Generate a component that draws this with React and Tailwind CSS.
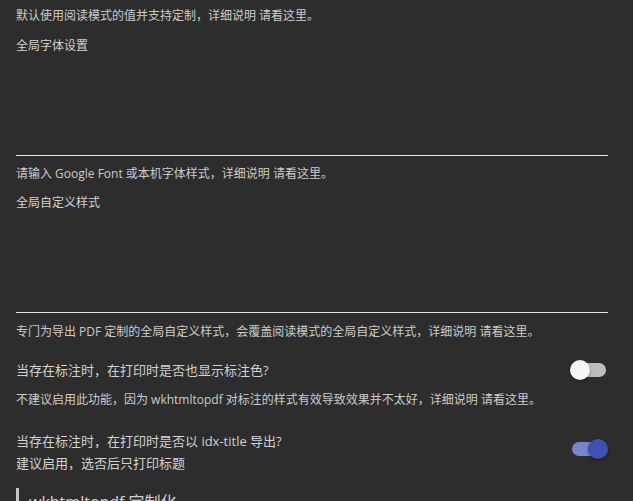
import React, { useState } from 'react';

const font = { fontFamily: '"Open Sans", "Noto Sans CJK SC", "Microsoft YaHei", sans-serif' };

const Toggle = ({ on, onChange, className = '' }) => (
  <button
    type="button"
    onClick={() => onChange(!on)}
    className={`relative w-[38px] h-[20px] shrink-0 ${className}`}
  >
    <span
      className={`absolute left-[2px] right-[2px] top-[3px] h-[14px] rounded-full ${
        on ? 'bg-[#7986cb]' : 'bg-[#bdbdbd]'
      }`}
    />
    <span
      className={`absolute top-0 w-[20px] h-[20px] rounded-full shadow-[0_1px_3px_rgba(0,0,0,0.4)] ${
        on ? 'left-[18px] bg-[#3f51b5]' : 'left-0 bg-[#f5f5f5]'
      }`}
    />
  </button>
);

const App = () => {
  const [showColor, setShowColor] = useState(false);
  const [idxTitle, setIdxTitle] = useState(true);

  return (
    <section
      style={font}
      className="min-h-screen h-[501px] overflow-hidden bg-[#2d2d2d] pl-4 pr-[25px] text-[#d2d2d2]"
    >
      <p className="pt-[6px] text-[12px] leading-[20px] text-[#cbcbcb]">
        默认使用阅读模式的值并支持定制，详细说明 请看这里。
      </p>

      <div className="h-[130px] border-b border-[#e4e4e4] pt-[10px]">
        <label className="block text-[12px] leading-[20px]">全局字体设置</label>
      </div>

      <p className="mt-[8px] text-[12px] leading-[20px] text-[#cbcbcb]">
        请输入 Google Font 或本机字体样式，详细说明 请看这里。
      </p>

      <div className="h-[129px] border-b border-[#e4e4e4] pt-[9px]">
        <label className="block text-[12px] leading-[20px]">全局自定义样式</label>
      </div>

      <p className="mt-[9px] text-[12px] leading-[20px] text-[#cbcbcb]">
        专门为导出 PDF 定制的全局自定义样式，会覆盖阅读模式的全局自定义样式，详细说明 请看这里。
      </p>

      <div className="mt-[18px] flex items-center justify-between">
        <span className="text-[13px] leading-[20px]">当存在标注时，在打印时是否也显示标注色?</span>
        <Toggle on={showColor} onChange={setShowColor} />
      </div>

      <p className="mt-[10px] text-[12px] leading-[20px] text-[#cbcbcb]">
        不建议启用此功能，因为 wkhtmltopdf 对标注的样式有效导致效果并不太好，详细说明 请看这里。
      </p>

      <div className="mt-[21px] flex items-start justify-between">
        <div className="flex flex-col gap-[2px]">
          <span className="text-[13px] leading-[20px]">当存在标注时，在打印时是否以 idx-title 导出?</span>
          <span className="text-[13px] leading-[20px]">建议启用，选否后只打印标题</span>
        </div>
        <Toggle on={idxTitle} onChange={setIdxTitle} className="mt-[8px]" />
      </div>

      <blockquote className="mt-[15px] border-l-[3px] border-[#c8c8c8] pl-[10px] pt-[2px] text-[16px] leading-[24px]">
        wkhtmltopdf 定制化
      </blockquote>
    </section>
  );
};

export default App;
